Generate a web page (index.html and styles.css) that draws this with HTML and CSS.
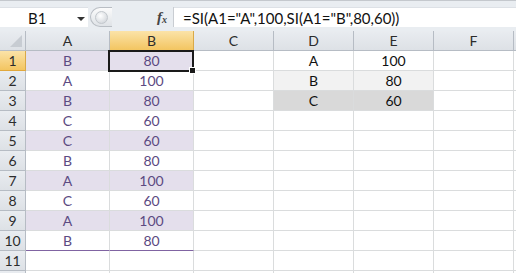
FILE: index.html
```html
<!DOCTYPE html>
<html lang="es">
<head>
    <meta charset="UTF-8">
    <title>Hoja de cálculo</title>
    <link rel="stylesheet" href="styles.css">
</head>
<body>
    <div class="formula-bar">
        <div class="name-box">
            <span class="cell-ref">B1</span>
            <span class="drop-arrow"></span>
        </div>
        <div class="grip"><span class="grip-knob"></span></div>
        <div class="fx">f<sub>x</sub></div>
        <div class="formula">=SI(A1="A",100,SI(A1="B",80,60))</div>
    </div>

    <div class="sheet">
        <div class="corner"><span class="corner-tri"></span></div>
        <div class="col-head">A</div>
        <div class="col-head active">B</div>
        <div class="col-head">C</div>
        <div class="col-head">D</div>
        <div class="col-head">E</div>
        <div class="col-head">F</div>
        <div class="col-head last"></div>

        <div class="row-head active">1</div>
        <div class="cell purple">B</div>
        <div class="cell purple">80</div>
        <div class="cell"></div>
        <div class="cell dark">A</div>
        <div class="cell dark">100</div>
        <div class="cell"></div>
        <div class="cell last"></div>

        <div class="row-head">2</div>
        <div class="cell">A</div>
        <div class="cell">100</div>
        <div class="cell"></div>
        <div class="cell dark light-fill">B</div>
        <div class="cell dark light-fill">80</div>
        <div class="cell"></div>
        <div class="cell last"></div>

        <div class="row-head">3</div>
        <div class="cell purple">B</div>
        <div class="cell purple">80</div>
        <div class="cell"></div>
        <div class="cell dark mid-fill">C</div>
        <div class="cell dark mid-fill">60</div>
        <div class="cell"></div>
        <div class="cell last"></div>

        <div class="row-head">4</div>
        <div class="cell">C</div>
        <div class="cell">60</div>
        <div class="cell"></div>
        <div class="cell"></div>
        <div class="cell"></div>
        <div class="cell"></div>
        <div class="cell last"></div>

        <div class="row-head">5</div>
        <div class="cell purple">C</div>
        <div class="cell purple">60</div>
        <div class="cell"></div>
        <div class="cell"></div>
        <div class="cell"></div>
        <div class="cell"></div>
        <div class="cell last"></div>

        <div class="row-head">6</div>
        <div class="cell">B</div>
        <div class="cell">80</div>
        <div class="cell"></div>
        <div class="cell"></div>
        <div class="cell"></div>
        <div class="cell"></div>
        <div class="cell last"></div>

        <div class="row-head">7</div>
        <div class="cell purple">A</div>
        <div class="cell purple">100</div>
        <div class="cell"></div>
        <div class="cell"></div>
        <div class="cell"></div>
        <div class="cell"></div>
        <div class="cell last"></div>

        <div class="row-head">8</div>
        <div class="cell">C</div>
        <div class="cell">60</div>
        <div class="cell"></div>
        <div class="cell"></div>
        <div class="cell"></div>
        <div class="cell"></div>
        <div class="cell last"></div>

        <div class="row-head">9</div>
        <div class="cell purple">A</div>
        <div class="cell purple">100</div>
        <div class="cell"></div>
        <div class="cell"></div>
        <div class="cell"></div>
        <div class="cell"></div>
        <div class="cell last"></div>

        <div class="row-head">10</div>
        <div class="cell table-end">B</div>
        <div class="cell table-end">80</div>
        <div class="cell"></div>
        <div class="cell"></div>
        <div class="cell"></div>
        <div class="cell"></div>
        <div class="cell last"></div>

        <div class="row-head">11</div>
        <div class="cell"></div>
        <div class="cell"></div>
        <div class="cell"></div>
        <div class="cell"></div>
        <div class="cell"></div>
        <div class="cell"></div>
        <div class="cell last"></div>

        <div class="row-head"></div>
        <div class="cell"></div>
        <div class="cell"></div>
        <div class="cell"></div>
        <div class="cell"></div>
        <div class="cell"></div>
        <div class="cell"></div>
        <div class="cell last"></div>

        <!-- celda activa -->
        <div class="selection"><span class="fill-handle"></span></div>
    </div>
</body>
</html>
```

FILE: styles.css
```css
body {
    margin: 0;
    width: 516px;
    height: 273px;
    overflow: hidden;
    font-family: "Lato", "Liberation Sans", sans-serif;
    background: #ffffff;
}
.formula-bar {
    display: flex;
    align-items: stretch;
    background: #e9edf1;
    border-top: 1px solid #c4c8cd;
    box-sizing: border-box;
    padding: 6px 0 4px 0;
    height: 31px;
}
.name-box {
    width: 88px;
    background: white;
    display: flex;
    align-items: center;
    position: relative;
    border-top: 1px solid #dde1e6;
}
.cell-ref {
    font-size: 15px;
    margin-left: 28px;
    color: #111;
}
.drop-arrow {
    position: absolute;
    left: 77px;
    top: 9px;
    border-left: 4px solid transparent;
    border-right: 4px solid transparent;
    border-top: 4px solid #333;
}
.grip {
    width: 22px;
    margin-left: 2px;
    background: linear-gradient(#fbfbfb, #dfe3e7);
    border: 1px solid #b9bec4;
    border-right: none;
    border-radius: 11px 0 0 11px;
    display: flex;
    align-items: center;
    padding-left: 4px;
    box-sizing: border-box;
}
.grip-knob {
    width: 11px;
    height: 11px;
    border-radius: 50%;
    background: radial-gradient(circle at 40% 35%, #ffffff, #c9ced4);
    border: 1px solid #c2c7cc;
}
.fx {
    width: 62px;
    text-align: right;
    padding-right: 6px;
    box-sizing: border-box;
    font-family: "Liberation Serif", serif;
    font-style: italic;
    font-weight: bold;
    font-size: 15px;
    color: #444;
    line-height: 20px;
    border-right: 1px solid #c9cdd2;
}
.fx sub {
    font-size: 10px;
    vertical-align: -1px;
}
.formula {
    flex: 1;
    background: white;
    font-size: 15px;
    line-height: 20px;
    padding-left: 9px;
    color: #111;
    white-space: nowrap;
    border-top: 1px solid #dde1e6;
}
.sheet {
    position: relative;
    display: grid;
    grid-template-columns: 26px 84px 84px 80px 80px 80px 80px 10px;
    grid-auto-rows: 20px;
}
.corner,
.col-head,
.row-head {
    background: linear-gradient(#e9ecf0, #dde1e6);
    border-right: 1px solid #b6bcc4;
    border-bottom: 1px solid #b6bcc4;
    box-sizing: border-box;
    font-size: 14px;
    color: #2c2c2c;
    display: flex;
    align-items: center;
    justify-content: center;
}
.corner {
    position: relative;
}
.corner-tri {
    position: absolute;
    right: 3px;
    bottom: 3px;
    border-left: 12px solid transparent;
    border-bottom: 12px solid #c7ccd2;
}
.col-head.last {
    border-right: none;
}
.col-head.active,
.row-head.active {
    background: linear-gradient(#fbe3a8, #f3c561);
    border-bottom-color: #e1a83c;
    border-right-color: #d9a948;
}
.cell {
    border-right: 1px solid #dadcdd;
    border-bottom: 1px solid #dadcdd;
    box-sizing: border-box;
    font-size: 14px;
    color: #5c4a82;
    display: flex;
    align-items: center;
    justify-content: center;
}
.cell.last {
    border-right: none;
}
.purple {
    background: #e4dfec;
}
.table-end {
    border-bottom-color: #8064a2;
}
.dark {
    color: #111;
}
.light-fill {
    background: #f2f2f2;
}
.mid-fill {
    background: #d9d9d9;
}
.selection {
    position: absolute;
    left: 108px;
    top: 19px;
    width: 86px;
    height: 22px;
    border: 2px solid #1a1a1a;
    box-sizing: border-box;
}
.fill-handle {
    position: absolute;
    right: -4px;
    bottom: -4px;
    width: 5px;
    height: 5px;
    background: #1a1a1a;
    border: 1px solid white;
}
```
